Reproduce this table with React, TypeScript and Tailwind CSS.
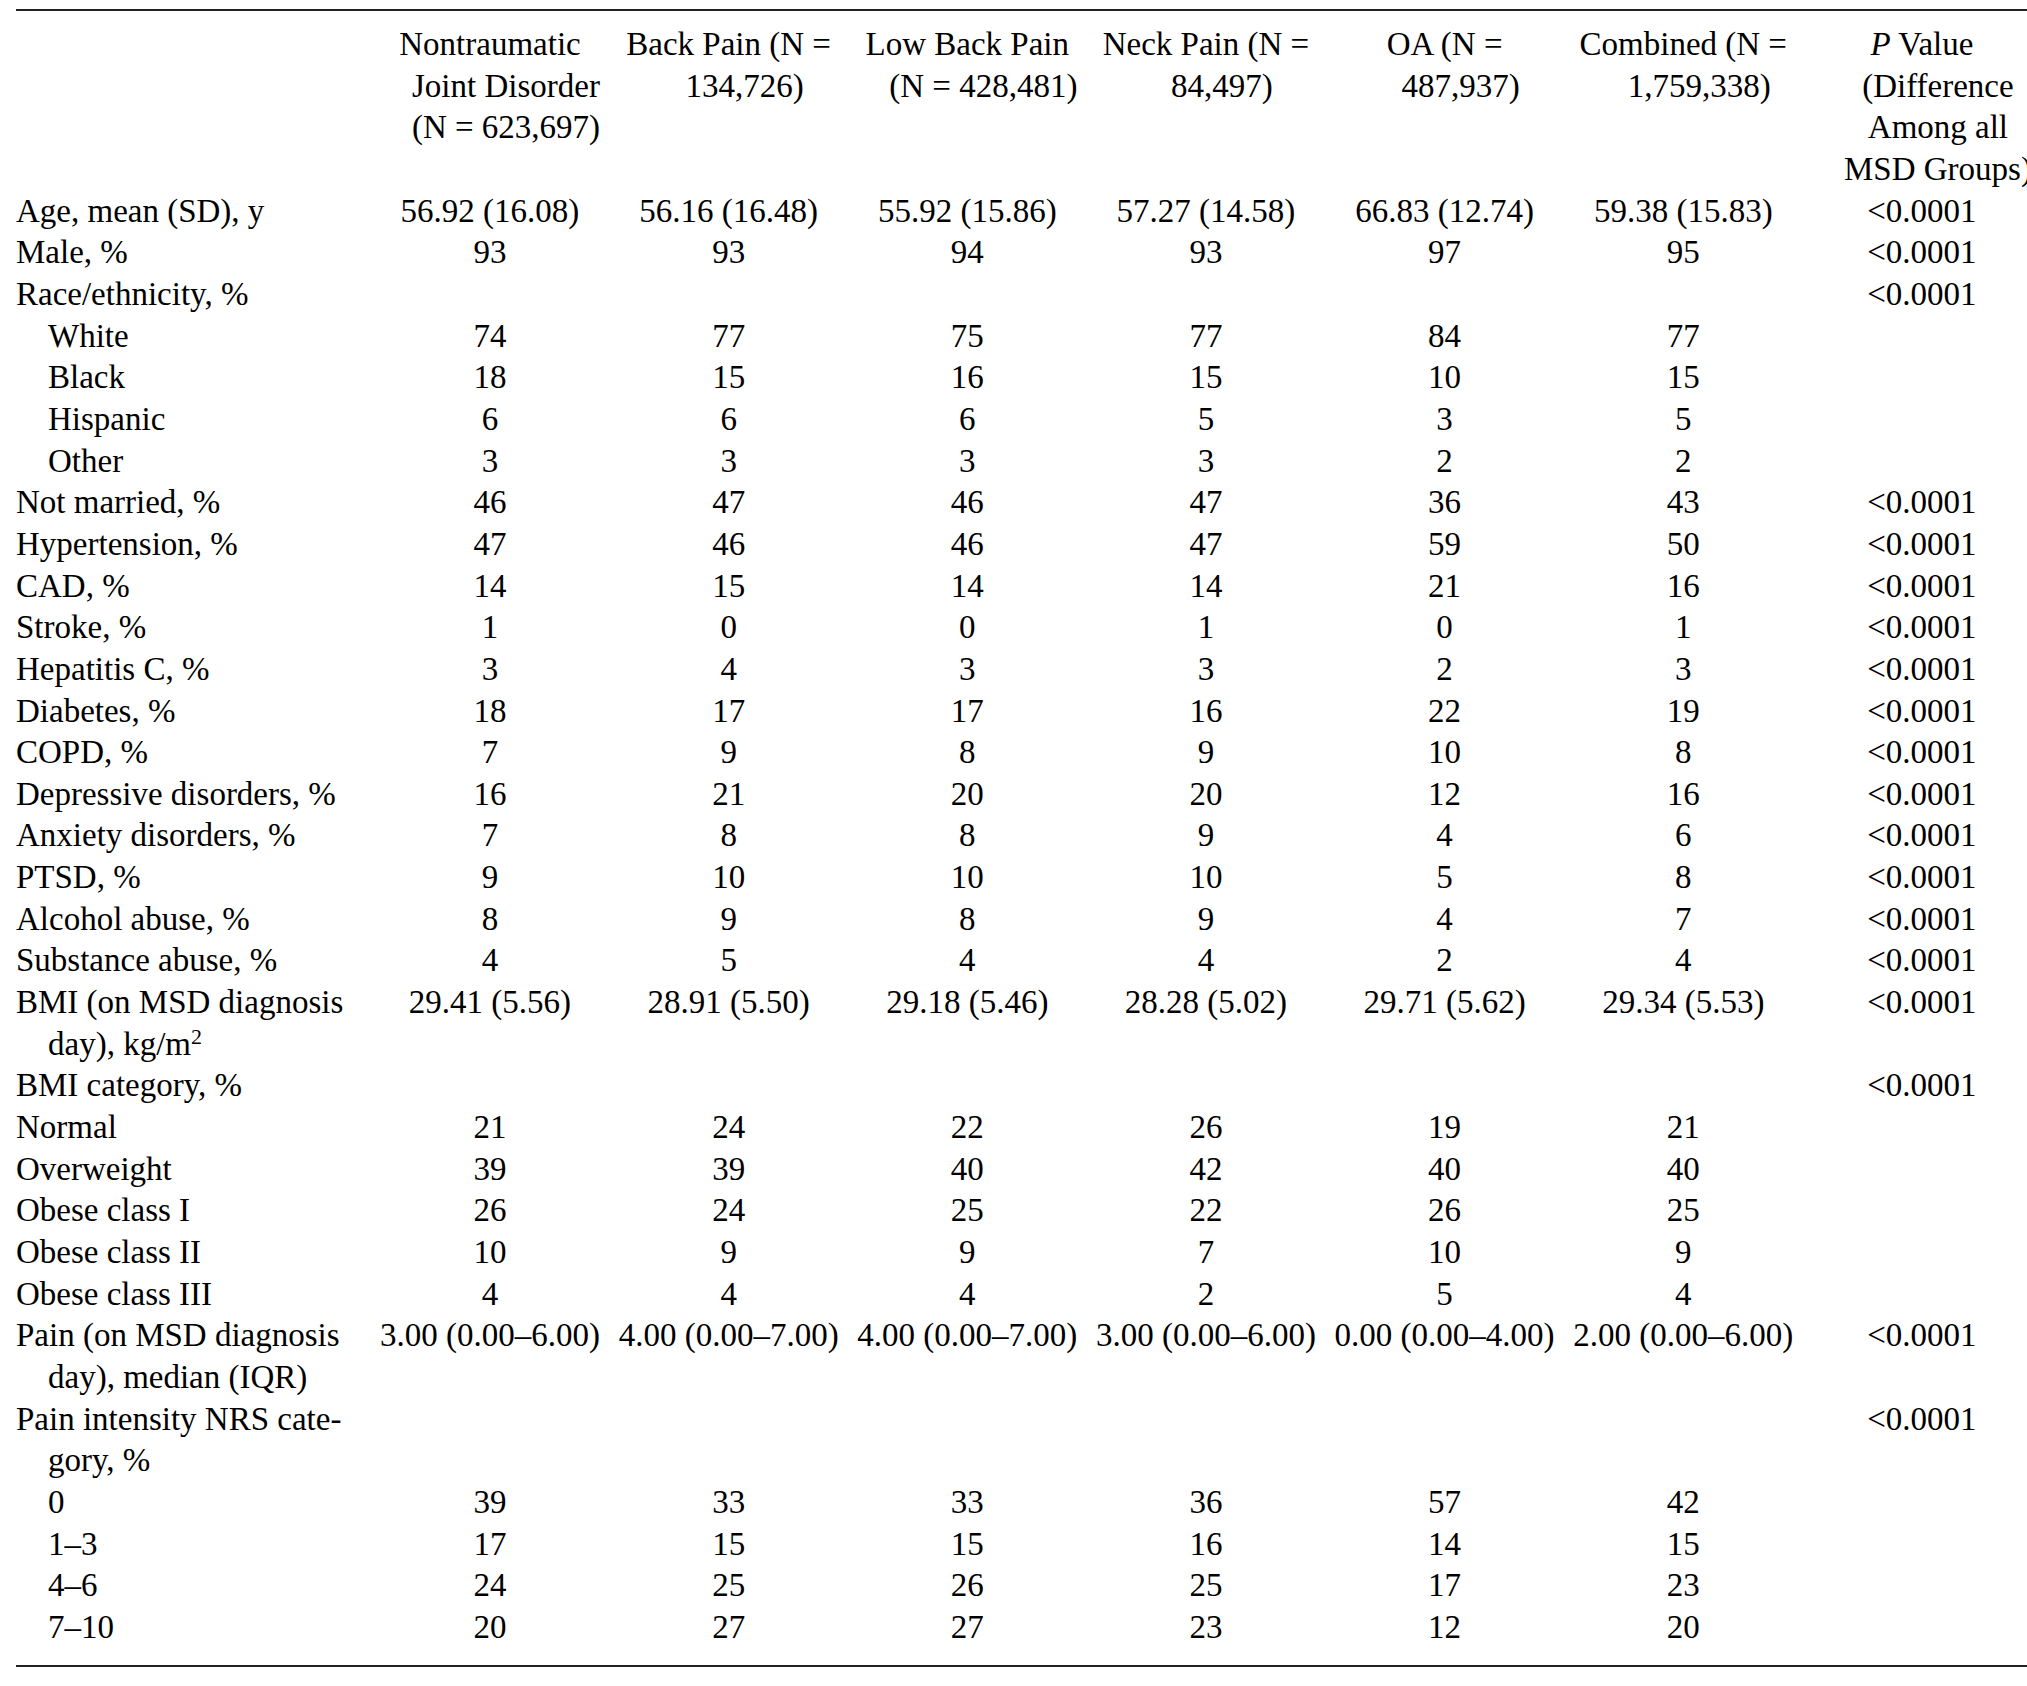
import type { ReactNode } from "react";

type Row = {
  label: ReactNode[];
  sub?: boolean;
  values?: string[];
  p?: string;
};

const P = "<0.0001";

const headers: ReactNode[][] = [
  ["Nontraumatic", "Joint Disorder", "(N = 623,697)"],
  ["Back Pain (N =", "134,726)"],
  ["Low Back Pain", "(N = 428,481)"],
  ["Neck Pain (N =", "84,497)"],
  ["OA (N =", "487,937)"],
  ["Combined (N =", "1,759,338)"],
  [
    <>
      <i>P</i> Value
    </>,
    "(Difference",
    "Among all",
    "MSD Groups)",
  ],
];

const rows: Row[] = [
  {
    label: ["Age, mean (SD), y"],
    values: ["56.92 (16.08)", "56.16 (16.48)", "55.92 (15.86)", "57.27 (14.58)", "66.83 (12.74)", "59.38 (15.83)"],
    p: P,
  },
  { label: ["Male, %"], values: ["93", "93", "94", "93", "97", "95"], p: P },
  { label: ["Race/ethnicity, %"], p: P },
  { label: ["White"], sub: true, values: ["74", "77", "75", "77", "84", "77"] },
  { label: ["Black"], sub: true, values: ["18", "15", "16", "15", "10", "15"] },
  { label: ["Hispanic"], sub: true, values: ["6", "6", "6", "5", "3", "5"] },
  { label: ["Other"], sub: true, values: ["3", "3", "3", "3", "2", "2"] },
  { label: ["Not married, %"], values: ["46", "47", "46", "47", "36", "43"], p: P },
  { label: ["Hypertension, %"], values: ["47", "46", "46", "47", "59", "50"], p: P },
  { label: ["CAD, %"], values: ["14", "15", "14", "14", "21", "16"], p: P },
  { label: ["Stroke, %"], values: ["1", "0", "0", "1", "0", "1"], p: P },
  { label: ["Hepatitis C, %"], values: ["3", "4", "3", "3", "2", "3"], p: P },
  { label: ["Diabetes, %"], values: ["18", "17", "17", "16", "22", "19"], p: P },
  { label: ["COPD, %"], values: ["7", "9", "8", "9", "10", "8"], p: P },
  { label: ["Depressive disorders, %"], values: ["16", "21", "20", "20", "12", "16"], p: P },
  { label: ["Anxiety disorders, %"], values: ["7", "8", "8", "9", "4", "6"], p: P },
  { label: ["PTSD, %"], values: ["9", "10", "10", "10", "5", "8"], p: P },
  { label: ["Alcohol abuse, %"], values: ["8", "9", "8", "9", "4", "7"], p: P },
  { label: ["Substance abuse, %"], values: ["4", "5", "4", "4", "2", "4"], p: P },
  {
    label: [
      "BMI (on MSD diagnosis",
      <>
        day), kg/m<sup className="text-[22px] leading-none">2</sup>
      </>,
    ],
    values: ["29.41 (5.56)", "28.91 (5.50)", "29.18 (5.46)", "28.28 (5.02)", "29.71 (5.62)", "29.34 (5.53)"],
    p: P,
  },
  { label: ["BMI category, %"], p: P },
  { label: ["Normal"], values: ["21", "24", "22", "26", "19", "21"] },
  { label: ["Overweight"], values: ["39", "39", "40", "42", "40", "40"] },
  { label: ["Obese class I"], values: ["26", "24", "25", "22", "26", "25"] },
  { label: ["Obese class II"], values: ["10", "9", "9", "7", "10", "9"] },
  { label: ["Obese class III"], values: ["4", "4", "4", "2", "5", "4"] },
  {
    label: ["Pain (on MSD diagnosis", "day), median (IQR)"],
    values: [
      "3.00 (0.00–6.00)",
      "4.00 (0.00–7.00)",
      "4.00 (0.00–7.00)",
      "3.00 (0.00–6.00)",
      "0.00 (0.00–4.00)",
      "2.00 (0.00–6.00)",
    ],
    p: P,
  },
  { label: ["Pain intensity NRS cate-", "gory, %"], p: P },
  { label: ["0"], sub: true, values: ["39", "33", "33", "36", "57", "42"] },
  { label: ["1–3"], sub: true, values: ["17", "15", "15", "16", "14", "15"] },
  { label: ["4–6"], sub: true, values: ["24", "25", "26", "25", "17", "23"] },
  { label: ["7–10"], sub: true, values: ["20", "27", "27", "23", "12", "20"] },
];

const App = () => {
  return (
    <div className="w-[2027px] h-[1686px] overflow-hidden bg-white text-black font-['Liberation_Serif',serif] text-[33px] leading-[41.65px]">
      <div className="ml-[16px] mt-[9px] w-[2026px] border-t-2 border-b-2 border-[#222] pt-[13px] pb-[16px]">
        {/* header */}
        <div className="grid grid-cols-[354.67px_repeat(7,238.67px)]">
          <div />
          {headers.map((lines, i) => (
            <div key={i} className="text-center whitespace-nowrap">
              {lines.map((line, j) => (
                <div key={j} className={j > 0 ? "pl-[32px]" : ""}>
                  {line}
                </div>
              ))}
            </div>
          ))}
        </div>

        {/* body */}
        {rows.map((row, i) => (
          <div key={i} className="grid grid-cols-[354.67px_repeat(7,238.67px)]">
            <div className="whitespace-nowrap">
              {row.label.map((line, j) => (
                <div key={j} className={j > 0 || row.sub ? "pl-[32px]" : ""}>
                  {line}
                </div>
              ))}
            </div>
            {Array.from({ length: 6 }).map((_, k) => (
              <div key={k} className="text-center whitespace-nowrap">
                {row.values?.[k] ?? ""}
              </div>
            ))}
            <div className="text-center whitespace-nowrap">{row.p ?? ""}</div>
          </div>
        ))}
      </div>
    </div>
  );
};

export default App;
